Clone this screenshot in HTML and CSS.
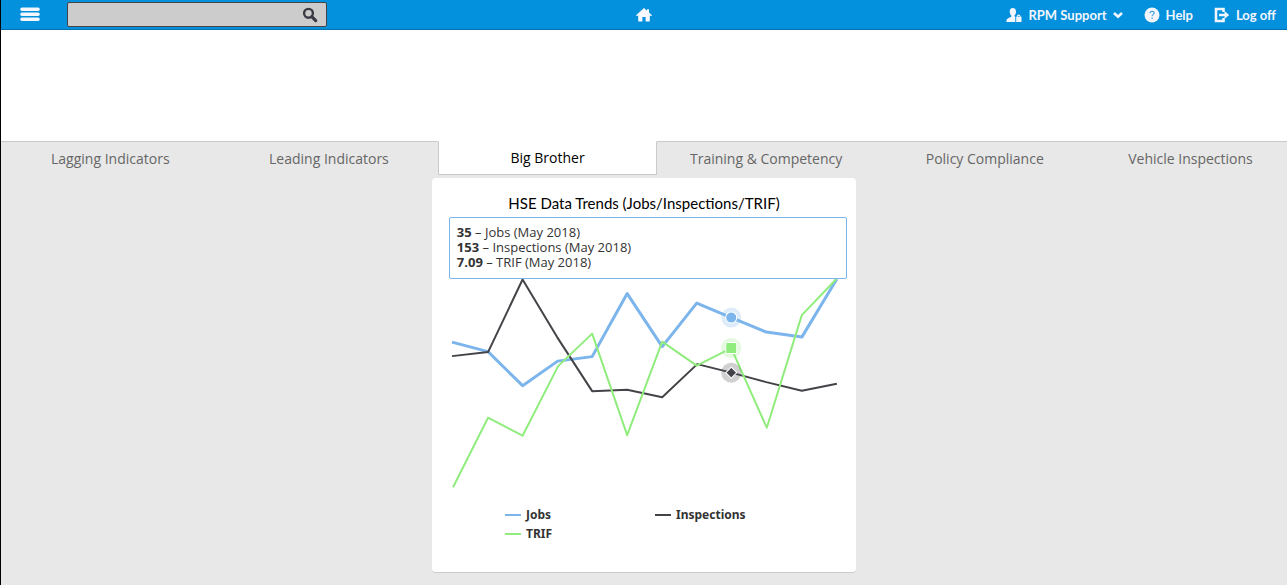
FILE: index.html
```html
<!DOCTYPE html>
<html lang="en">
<head>
  <meta charset="UTF-8" />
  <title>HSE Dashboard</title>
  <link rel="stylesheet" href="styles.css">
</head>
<body>
  <header class="topbar">
    <div class="topbar-side">
      <button class="menu-btn" type="button" aria-label="Menu">
        <svg width="20" height="15" viewBox="0 0 20 15"><path d="M2 2.2h16M2 7.2h16M2 12.2h16" stroke="#f4f7fc" stroke-width="3.6" stroke-linecap="round"/></svg>
      </button>
      <form class="search">
        <input class="search-input" type="text" aria-label="Search">
        <button class="search-btn" type="submit" aria-label="Go">
          <svg width="16" height="16" viewBox="0 0 16 16" fill="none" stroke="#3a3a44"><circle cx="6.5" cy="6.3" r="4.4" stroke-width="2.4"/><path d="M9.8 9.6l3.9 4" stroke-width="3.2" stroke-linecap="round"/></svg>
        </button>
      </form>
    </div>

    <a class="home" href="#" aria-label="Home">
      <svg width="16" height="14" viewBox="0 0 16 14" fill="#f8f8ff"><path d="M8 0L0 7.2l1 1 1.2-.9V13.4h4.2V9h3.2v4.4h4.2V7.3l1.2.9 1-1L13 4.6V1.2h-2v1.5z"/></svg>
    </a>

    <nav class="topbar-side topbar-links">
      <a href="#">
        <svg width="16" height="16" viewBox="0 0 16 16" fill="#f2f6fc"><path d="M6.8 1C4.7 1 3.6 2.500 3.700 4.700c.1 1.700.7 3 1.600 3.900v1.200C3.200 10.800.6 11.600.4 13.600V15H9.300v-5.200l-.9-.5v-.7C9.300 7.700 10 6.400 10 4.700 10.100 2.500 8.900 1 6.800 1z"/><path d="M10.200 9.800h.6c0-3 3.800-3 3.800 0h.9V15h-5.300zM11.800 9.800h1.800c0-1.300-1.800-1.300-1.800 0z"/></svg>
        <span>RPM Support</span>
        <svg width="10" height="8" viewBox="0 0 10 8" fill="none"><path d="M1 2L5 5.800 9 2" stroke="#f2f6fc" stroke-width="2.600"/></svg>
      </a>
      <a href="#">
        <svg width="16" height="16" viewBox="0 0 16 16"><circle cx="8" cy="8" r="7.500" fill="#f2f6fc"/><path d="M6 6.300c.1-2.700 4.100-2.500 4.100-.2 0 1.500-2 1.600-2 3.100M8.100 10.600v1.300" fill="none" stroke="#4aa3dd" stroke-width="1.200"/></svg>
        <span>Help</span>
      </a>
      <a href="#">
        <svg width="16" height="16" viewBox="0 0 16 16"><path d="M9.500 5V2H2v12h7.500v-3" fill="none" stroke="#f2f6fc" stroke-width="2.600"/><path d="M5 6.700h5.500V4l4.700 4-4.700 4V9.300H5z" fill="#f2f6fc"/></svg>
        <span>Log off</span>
      </a>
    </nav>
  </header>

  <div class="banner"></div>

  <nav class="tabs">
    <a class="tab" href="#">Lagging Indicators</a>
    <a class="tab" href="#">Leading Indicators</a>
    <a class="tab active" href="#">Big Brother</a>
    <a class="tab" href="#">Training &amp; Competency</a>
    <a class="tab" href="#">Policy Compliance</a>
    <a class="tab last" href="#">Vehicle Inspections</a>
  </nav>

  <main class="content">
    <section class="card">
      <h2>HSE Data Trends (Jobs/Inspections/TRIF)</h2>
      <div class="chart">
        <svg class="plot" viewBox="0 0 424 284" fill="none" stroke-linejoin="round">
          <!-- Jobs -->
          <polyline stroke="#7cb5ec" stroke-width="3" points="20,125 56,134.5 90.5,168.5 125.5,144 160,139.5 195,76.5 230,129.5 264.5,86 299,100.5 334,115 369.5,120 404.5,62"/>
          <!-- Inspections -->
          <polyline stroke="#434348" stroke-width="2" points="20,139 56,135 90.5,62.5 125,120 160,174 195,172.5 230,180 265,147 299,155.5 334,165 369.5,173.5 404.5,166.5"/>
          <!-- TRIF -->
          <polyline stroke="#90ed7d" stroke-width="2" points="21,270 56,200.5 90.5,218.5 126,149 160,116.5 195,218 230,124.5 264.5,148.5 299,131 334.5,210.5 369.5,98 404,62"/>
          <!-- hovered points, May 2018 -->
          <circle cx="299" cy="100.5" r="10" fill="#7cb5ec" fill-opacity="0.25"/>
          <circle cx="299" cy="100.5" r="5.5" fill="#7cb5ec" stroke="#fff"/>
          <circle cx="299" cy="155.5" r="10" fill="#434348" fill-opacity="0.25"/>
          <path d="M299 150l5.5 5.5-5.5 5.500-5.500-5.500z" fill="#434348" stroke="#fff"/>
          <circle cx="299" cy="131" r="10" fill="#90ed7d" fill-opacity="0.25"/>
          <rect x="293.5" y="125.5" width="11" height="11" fill="#90ed7d" stroke="#fff"/>
        </svg>
        <div class="tooltip">
          <p><strong>35</strong> – Jobs (May 2018)</p>
          <p><strong>153</strong> – Inspections (May 2018)</p>
          <p><strong>7.09</strong> – TRIF (May 2018)</p>
        </div>
      </div>
      <ul class="legend">
        <li class="jobs">Jobs</li>
        <li class="inspections">Inspections</li>
        <li class="trif">TRIF</li>
      </ul>
    </section>
  </main>
</body>
</html>
```

FILE: styles.css
```css
* {
  box-sizing: border-box;
}

body {
  margin: 0;
  min-height: 100vh;
  border-left: 1px solid #000;
  background: #e8e8e8;
  font-family: "Open Sans", sans-serif;
  color: #333;
}

a {
  text-decoration: none;
}

svg {
  display: block;
}

button {
  padding: 0;
  border: none;
  background: none;
  cursor: pointer;
}

/* top bar */
.topbar {
  display: flex;
  align-items: center;
  height: 30px;
  padding-right: 11px;
  background: #0390dd;
  border-bottom: 1px solid #0670ac;
}

.topbar-side {
  flex: 1;
  display: flex;
  align-items: center;
}

.home {
  margin-left: 11px;
}

.menu-btn {
  margin: 0 27px 0 19px;
}

.search {
  display: flex;
  align-items: center;
  width: 260px;
  height: 25px;
  padding-right: 8px;
  background: #ccc;
  border: 1px solid #444;
  border-radius: 2px;
}

.search-input {
  flex: 1;
  min-width: 0;
  height: 100%;
  padding: 0 6px;
  border: none;
  outline: none;
  background: none;
}

.topbar-links {
  justify-content: flex-end;
  gap: 21px;
}

.topbar-links a {
  display: flex;
  align-items: center;
  gap: 6px;
  color: #f2f6fc;
  font: bold 13px/20px Lato, sans-serif;
}

/* tabs */
.banner {
  height: 111px;
  background: #fff;
}

.tabs {
  display: flex;
  align-items: flex-start;
  height: 37px;
}

.tab {
  width: 17%;
  height: 34px;
  border-top: 1px solid #c8cacb;
  color: #666;
  font-size: 14px;
  line-height: 34px;
  text-align: center;
}

.tab.last {
  width: 15%;
}

.tab.active {
  background: #fff;
  border: 1px solid #c8cacb;
  border-top-color: #fff;
  color: #000;
  line-height: 32px;
}

/* chart card */
.content {
  display: flex;
  justify-content: center;
}

.card {
  width: 33%;
  padding-bottom: 29px;
  background: #fff;
  border-bottom: 1px solid #ccc;
  border-radius: 4px;
}

.card h2 {
  margin: 0;
  padding: 14px 0 2px;
  color: #000;
  font: 15px/23px Lato, sans-serif;
  text-align: center;
}

.chart {
  position: relative;
}

.plot {
  width: 100%;
}

.tooltip {
  position: absolute;
  top: 0;
  left: 17px;
  right: 9px;
  padding: 7px 7px 8px;
  background: #fff;
  border: 1px solid #7cb5ec;
  border-radius: 2px;
  font-size: 13px;
  line-height: 15px;
}

.tooltip p {
  margin: 0;
}

.legend {
  display: flex;
  flex-wrap: wrap;
  width: 300px;
  margin: 0 auto;
  padding: 4px 0 0;
  list-style: none;
  font: bold 12px/19px "Noto Sans", sans-serif;
}

.legend li {
  display: flex;
  align-items: center;
  gap: 5px;
  width: 139px;
}

.legend li:nth-child(odd) {
  width: 161px;
  padding-left: 11px;
}

.legend li::before {
  content: "";
  width: 16px;
  height: 2px;
  background: #7cb5ec;
}

.legend .inspections::before {
  background: #434348;
}

.legend .trif::before {
  background: #90ed7d;
}
```
